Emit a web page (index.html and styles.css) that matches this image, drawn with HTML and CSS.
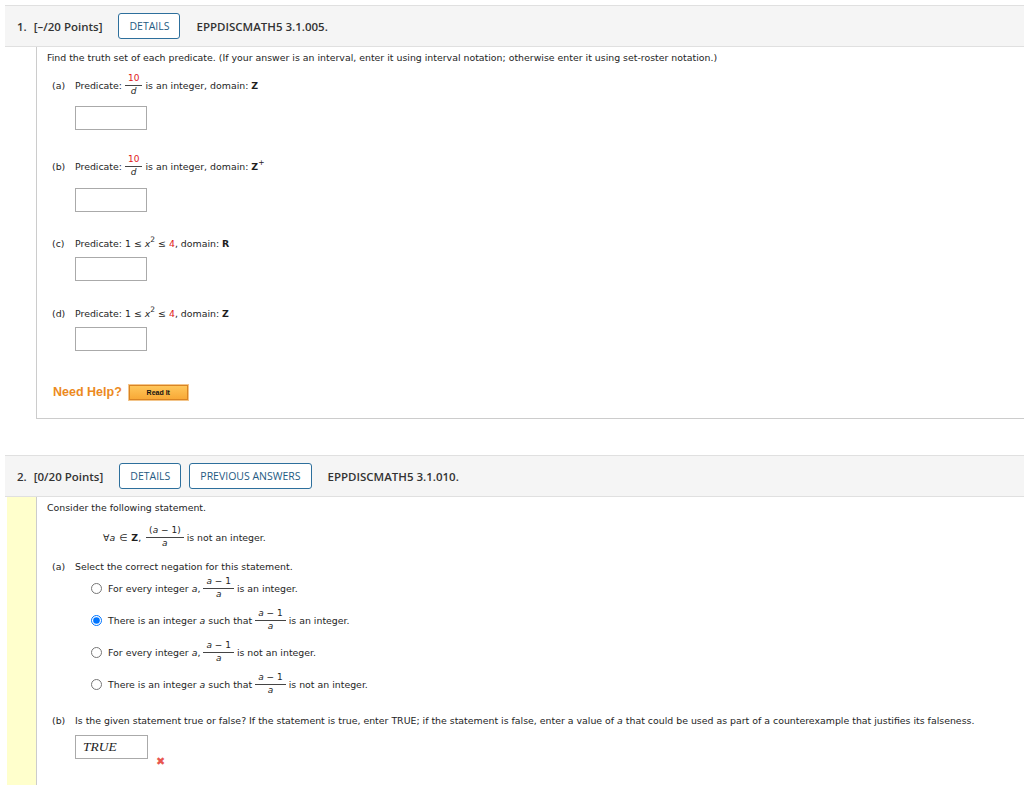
FILE: index.html
```html
<!DOCTYPE html>
<html>
<head>
<meta charset="utf-8">
<link rel="stylesheet" href="styles.css">
</head>
<body>
<div class="page">
  <section class="question q1">
    <div class="qhead">
      <span class="qnum">1.</span>
      <span class="qpts">[–/20 Points]</span>
      <span class="btn">DETAILS</span>
      <span class="qcode">EPPDISCMATH5 3.1.005.</span>
    </div>
    <div class="qrow">
      <div class="gutter"></div>
      <div class="qbody q1body">
        <p class="intro">Find the truth set of each predicate. (If your answer is an interval, enter it using interval notation; otherwise enter it using set-roster notation.)</p>

        <div class="part pa">
          <div class="pline tall"><span class="plabel">(a)</span><span>Predicate: </span><span class="frac"><span class="num red">10</span><span class="den"><i>d</i></span></span><span> is an integer, domain: <b>Z</b></span></div>
          <div class="ibox"></div>
        </div>

        <div class="part pb">
          <div class="pline tall"><span class="plabel">(b)</span><span>Predicate: </span><span class="frac"><span class="num red">10</span><span class="den"><i>d</i></span></span><span> is an integer, domain: <b>Z</b><sup class="sup">+</sup></span></div>
          <div class="ibox"></div>
        </div>

        <div class="part pc">
          <div class="pline short"><span class="plabel">(c)</span><span>Predicate: <span class="serif">1 ≤ <i>x</i><sup class="sup">2</sup> ≤ <span class="red">4</span></span>, domain: <b>R</b></span></div>
          <div class="ibox"></div>
        </div>

        <div class="part pd">
          <div class="pline short"><span class="plabel">(d)</span><span>Predicate: <span class="serif">1 ≤ <i>x</i><sup class="sup">2</sup> ≤ <span class="red">4</span></span>, domain: <b>Z</b></span></div>
          <div class="ibox"></div>
        </div>

        <div class="help">
          <span class="helptext">Need Help?</span>
          <span class="readit">Read It</span>
        </div>
      </div>
    </div>
  </section>

  <section class="question q2">
    <div class="qhead">
      <span class="qnum">2.</span>
      <span class="qpts">[0/20 Points]</span>
      <span class="btn">DETAILS</span>
      <span class="btn prev">PREVIOUS ANSWERS</span>
      <span class="qcode">EPPDISCMATH5 3.1.010.</span>
    </div>
    <div class="qrow">
      <div class="gutter yellow"></div>
      <div class="qbody q2body">
        <p class="intro">Consider the following statement.</p>
        <div class="stmt"><span class="forall">∀<i>a</i> ∈ <b>Z</b>,</span><span class="frac"><span class="num">(<i>a</i> − 1)</span><span class="den"><i>a</i></span></span><span> is not an integer.</span></div>

        <div class="pline sel"><span class="plabel">(a)</span><span>Select the correct negation for this statement.</span></div>
        <div class="opts">
          <label class="opt"><input type="radio" name="neg"><span>For every integer <i>a</i>, </span><span class="frac"><span class="num"><i>a</i> − 1</span><span class="den"><i>a</i></span></span><span> is an integer.</span></label>
          <label class="opt"><input type="radio" name="neg" checked><span>There is an integer <i>a</i> such that </span><span class="frac"><span class="num"><i>a</i> − 1</span><span class="den"><i>a</i></span></span><span> is an integer.</span></label>
          <label class="opt"><input type="radio" name="neg"><span>For every integer <i>a</i>, </span><span class="frac"><span class="num"><i>a</i> − 1</span><span class="den"><i>a</i></span></span><span> is not an integer.</span></label>
          <label class="opt"><input type="radio" name="neg"><span>There is an integer <i>a</i> such that </span><span class="frac"><span class="num"><i>a</i> − 1</span><span class="den"><i>a</i></span></span><span> is not an integer.</span></label>
        </div>

        <div class="pline partb"><span class="plabel">(b)</span><span>Is the given statement true or false? If the statement is true, enter TRUE; if the statement is false, enter a value of <i>a</i> that could be used as part of a counterexample that justifies its falseness.</span></div>
        <div class="answer">
          <div class="ibox filled">TRUE</div>
          <span class="wrong">✖</span>
        </div>
      </div>
    </div>
  </section>
</div>
</body>
</html>
```

FILE: styles.css
```css
html, body {
  margin: 0;
  padding: 0;
  background: #fff;
}
.page {
  padding: 5px 0 0 5px;
  font-family: "DejaVu Sans", Verdana, sans-serif;
  font-size: 9.4px;
  color: #1e1e1e;
}
.question {
  display: flex;
  flex-direction: column;
}
.q2 {
  margin-top: 36px;
}
.qhead {
  height: 40px;
  background: #f5f5f5;
  border-top: 1px solid #e0e0e0;
  border-bottom: 1px solid #e0e0e0;
  display: flex;
  align-items: center;
  font-family: "Open Sans", sans-serif;
  font-size: 11.5px;
  color: #333;
  padding-left: 12px;
}
.qnum {
  font-weight: 600;
  margin-right: 7px;
}
.qpts {
  font-weight: 600;
  margin-right: 16px;
}
.btn {
  display: inline-flex;
  align-items: center;
  height: 24px;
  padding: 0 10px;
  border: 1.5px solid #2d6f9c;
  border-radius: 3px;
  color: #245a82;
  font-size: 10.5px;
  font-weight: 500;
  margin-right: 7px;
  background: #fff;
}
.btn.prev {
  margin-left: 1px;
}
.qcode {
  font-weight: 600;
  margin-left: 9px;
}
.qrow {
  display: flex;
}
.gutter {
  width: 31px;
  flex: none;
}
.gutter.yellow {
  margin-left: 2px;
  width: 29px;
  background: #ffffcc;
}
.qbody {
  flex: 1;
  border-left: 1px solid #ccc;
  padding-left: 10px;
}
.q1body {
  border-bottom: 1px solid #ccc;
  padding-bottom: 18px;
}
.q2body {
  padding-bottom: 30px;
}
.intro {
  margin: 0;
  padding-top: 5px;
  line-height: 12px;
}
.pline {
  display: flex;
  align-items: center;
  white-space: nowrap;
}
.pline.tall { height: 24px; }
.pline.short { height: 14px; }
.plabel {
  margin-left: 5px;
  width: 23px;
  flex: none;
}
.part {
  display: flex;
  flex-direction: column;
}
.pa { margin-top: 9px; }
.pb { margin-top: 24px; }
.pc { margin-top: 24px; }
.pd { margin-top: 25px; }
.frac {
  display: inline-flex;
  flex-direction: column;
  align-items: stretch;
  text-align: center;
  margin: 0 3px;
}
.frac .num {
  font-size: 9px;
  line-height: 11px;
  padding: 0 3px 1px;
  border-bottom: 1px solid #444;
}
.frac .den {
  font-size: 9px;
  line-height: 11px;
}
.red { color: #e02020; }
.sup {
  font-size: 7.5px;
  vertical-align: 5px;
  line-height: 0;
}
.ibox {
  width: 70px;
  height: 22px;
  border: 1px solid #aaa;
  margin-left: 28px;
  margin-top: 9px;
  background: #fff;
}
.pb .ibox { margin-top: 10px; }
.pc .ibox, .pd .ibox { margin-top: 7px; }
.help {
  display: flex;
  align-items: center;
  height: 16px;
  margin-top: 33px;
  margin-left: 6px;
}
.helptext {
  font-family: "Liberation Sans", Arial, sans-serif;
  font-size: 12.5px;
  font-weight: 600;
  color: #ec8a1e;
  margin-right: 7px;
}
.readit {
  display: inline-flex;
  align-items: center;
  justify-content: center;
  width: 57px;
  height: 13px;
  border: 1px solid #d98424;
  outline: 1px solid #f3c58a;
  background: linear-gradient(#ffc65a, #f8a937);
  font-family: "Liberation Sans", Arial, sans-serif;
  font-size: 7px;
  font-weight: bold;
  color: #111;
}
.stmt {
  display: flex;
  align-items: center;
  height: 24px;
  margin-left: 56px;
  margin-top: 11px;
  white-space: nowrap;
}
.forall {
  word-spacing: 1px;
  margin-right: 2px;
}
.sel {
  height: 12px;
  margin-top: 11px;
}
.opts {
  display: flex;
  flex-direction: column;
  gap: 8px;
  margin-top: 4px;
  margin-left: 44px;
}
.opt {
  display: flex;
  align-items: center;
  height: 24px;
  white-space: nowrap;
}
.opt input {
  width: 11px;
  height: 11px;
  margin: 0 6px 0 0;
}
.partb {
  height: 12px;
  margin-top: 18.5px;
}
.answer {
  display: flex;
  align-items: flex-end;
}
.answer .ibox {
  width: 71px;
  margin-top: 8px;
  display: flex;
  align-items: center;
  font-family: "Liberation Serif", "Times New Roman", serif;
  font-style: italic;
  font-size: 13.5px;
  color: #222;
  text-indent: 7px;
}
.wrong {
  color: #e8564f;
  font-size: 11px;
  margin-left: 8px;
  margin-bottom: -9px;
}
```
